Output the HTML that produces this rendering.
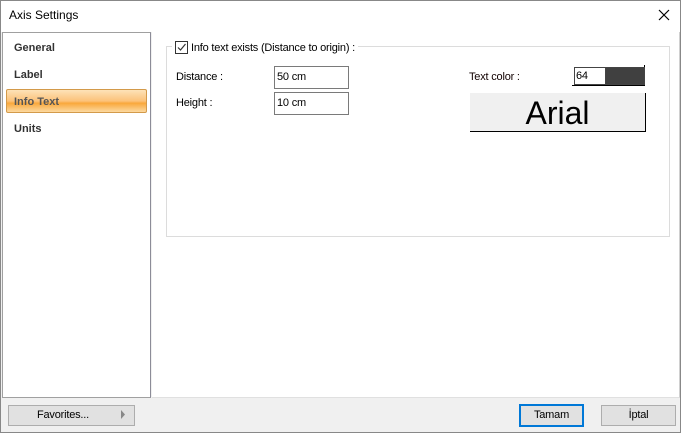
<html><head><style>
body{margin:0;width:681px;height:433px;overflow:hidden;background:#f0f0f0;font-family:"Liberation Sans",sans-serif;font-size:12px;position:relative}
.a{position:absolute}
.s{font-size:11px;letter-spacing:-0.2px}
</style></head><body>
<div class="a" style="left:0;top:0;width:679px;height:431px;border:1px solid #888;background:#f0f0f0"></div>
<div class="a" style="left:1px;top:1px;width:679px;height:31px;background:#fff"></div>
<div class="a" style="left:9px;top:8px;font-size:12px;color:#000">Axis Settings</div>
<svg class="a" style="left:658px;top:9px" width="12" height="12"><path d="M1 1L11 11M11 1L1 11" stroke="#000" stroke-width="1.2"/></svg>
<div class="a" style="left:2px;top:32px;width:147px;height:364px;background:#fff;border:1px solid #a0a0a0;border-right:1px solid #8c8c98"></div>
<div class="a" style="left:152px;top:32px;width:527px;height:365px;background:#fff;border-right:1px solid #d0d0d0;border-bottom:1px solid #e0e0e0"></div>
<div class="a" style="left:14px;top:42px;font-weight:bold;color:#333;font-size:11px">General</div>
<div class="a" style="left:14px;top:69px;font-weight:bold;color:#333;font-size:11px">Label</div>
<div class="a" style="left:6px;top:89px;width:139px;height:22px;border:1px solid #d39a4a;border-radius:2px;background:linear-gradient(#fde2b8,#fcc27a 50%,#f9a83c 60%,#fcd9a0)"></div>
<div class="a" style="left:14px;top:96px;font-weight:bold;color:#555;font-size:11px">Info Text</div>
<div class="a" style="left:14px;top:123px;font-weight:bold;color:#333;font-size:11px">Units</div>
<div class="a" style="left:166px;top:46px;width:502px;height:189px;border:1px solid #dcdcdc"></div>
<div class="a" style="left:172px;top:40px;width:186px;height:14px;background:#fff"></div>
<div class="a" style="left:175px;top:41px;width:11px;height:11px;border:1px solid #333;background:#fff"></div>
<svg class="a" style="left:176px;top:42px" width="11" height="11"><path d="M2 5.5L4.5 8L9.5 2" stroke="#333" stroke-width="1.2" fill="none"/></svg>
<div class="a s" style="left:191px;top:42px">Info text exists (Distance to origin) :</div>
<div class="a s" style="left:176px;top:71px">Distance :</div>
<div class="a s" style="left:176px;top:97px">Height :</div>
<div class="a" style="left:274px;top:66px;width:73px;height:21px;border:1px solid #7a7a7a;background:#fff"></div>
<div class="a s" style="left:277px;top:71px">50 cm</div>
<div class="a" style="left:274px;top:92px;width:73px;height:21px;border:1px solid #7a7a7a;background:#fff"></div>
<div class="a s" style="left:277px;top:97px">10 cm</div>
<div class="a s" style="left:469px;top:71px;color:#100">Text color :</div>
<div class="a" style="left:572px;top:65px;width:72px;height:20px;border-right:1px solid #000;border-bottom:1px solid #000"></div>
<div class="a" style="left:574px;top:67px;width:31px;height:16px;border:1px solid #444;background:#fff"></div>
<div class="a" style="left:605px;top:67px;width:38px;height:16px;border:1px solid #444;background:#404040"></div>
<div class="a s" style="left:576px;top:70px">64</div>
<div class="a" style="left:470px;top:93px;width:175px;height:38px;background:#f0f0f0;border-right:1px solid #000;border-bottom:1px solid #000"></div>
<div class="a" style="left:470px;top:93px;width:175px;text-align:center;font-size:32px;line-height:40px">Arial</div>
<div class="a" style="left:8px;top:405px;width:125px;height:19px;border:1px solid #adadad;background:#e1e1e1"></div>
<div class="a s" style="left:37px;top:409px">Favorites...</div>
<svg class="a" style="left:121px;top:410px" width="5" height="9"><path d="M0 0L4 4.5L0 9Z" fill="#888"/></svg>
<div class="a s" style="left:519px;top:404px;width:61px;height:19px;border:2px solid #0078d7;background:#e1e1e1;text-align:center;line-height:19px">Tamam</div>
<div class="a s" style="left:601px;top:405px;width:73px;height:19px;border:1px solid #adadad;background:#e1e1e1;text-align:center;line-height:19px">İptal</div>
</body></html>
